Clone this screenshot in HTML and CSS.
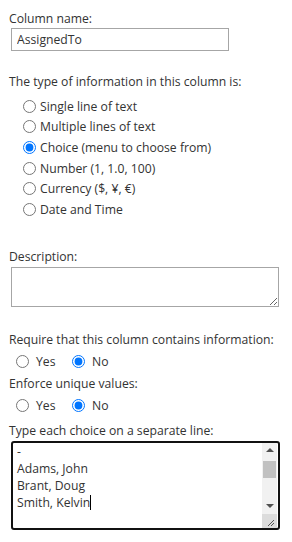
FILE: index.html
```html
<!DOCTYPE html>
<html>
<head>
<meta charset="utf-8">
<link rel="stylesheet" href="styles.css">
</head>
<body>
<div class="form">
  <div class="label first">Column name:</div>
  <input class="text-input" type="text" value="AssignedTo">

  <div class="label type-label">The type of information in this column is:</div>
  <div class="type-list">
    <label class="opt"><input type="radio" name="t"><span>Single line of text</span></label>
    <label class="opt"><input type="radio" name="t"><span>Multiple lines of text</span></label>
    <label class="opt"><input type="radio" name="t" checked><span>Choice (menu to choose from)</span></label>
    <label class="opt"><input type="radio" name="t"><span>Number (1, 1.0, 100)</span></label>
    <label class="opt"><input type="radio" name="t"><span>Currency ($, ¥, €)</span></label>
    <label class="opt"><input type="radio" name="t"><span>Date and Time</span></label>
  </div>

  <div class="label desc-label">Description:</div>
  <textarea class="desc"></textarea>

  <div class="label req-label">Require that this column contains information:</div>
  <div class="yn">
    <label class="yn-opt"><input type="radio" name="r"><span>Yes</span></label>
    <label class="yn-opt"><input type="radio" name="r" checked><span>No</span></label>
  </div>
  <div class="label row-label">Enforce unique values:</div>
  <div class="yn">
    <label class="yn-opt"><input type="radio" name="u"><span>Yes</span></label>
    <label class="yn-opt"><input type="radio" name="u" checked><span>No</span></label>
  </div>

  <div class="label choice-label">Type each choice on a separate line:</div>
  <div class="choices">
    <div class="choices-text">
      <div class="line">-</div>
      <div class="line">Adams, John</div>
      <div class="line">Brant, Doug</div>
      <div class="line">Smith, Kelvin<span class="caret"></span></div>
    </div>
    <div class="scrollbar">
      <div class="arrow up"></div>
      <div class="track"><div class="thumb"></div></div>
      <div class="arrow down"></div>
      <div class="resizer">
        <svg width="14" height="14" viewBox="0 0 14 14"><path d="M12 6 L6 12 M12 9 L9 12" stroke="#555" stroke-width="1"/></svg>
      </div>
    </div>
  </div>
</div>
</body>
</html>
```
FILE: styles.css
```css
html, body {
  margin: 0;
  padding: 0;
  background: #fff;
}
body {
  font-family: "Open Sans", "Noto Sans", sans-serif;
  font-size: 12.2px;
  color: #333;
}
.form {
  padding: 10px 0 0 9px;
  display: flex;
  flex-direction: column;
  align-items: flex-start;
}
.label {
  line-height: 20px;
  height: 20px;
  white-space: nowrap;
}
.first {
  line-height: 18px;
  height: 18px;
}
.text-input {
  box-sizing: border-box;
  margin: 0 0 0 2px;
  width: 218px;
  height: 23px;
  border: 1px solid #a6a6a6;
  border-radius: 0;
  padding: 0 5px;
  font: inherit;
  color: #333;
  outline: none;
}
.type-label {
  margin-top: 21px;
}
.type-list {
  display: flex;
  flex-direction: column;
  padding-left: 14px;
  margin-top: 4px;
}
.opt {
  display: flex;
  align-items: center;
  height: 20.6px;
  white-space: nowrap;
}
.opt input, .yn-opt input {
  margin: 0;
  width: 13px;
  height: 13px;
}
.opt span {
  margin-left: 4px;
}
.desc-label {
  margin-top: 27px;
}
.desc {
  box-sizing: border-box;
  margin: 0 0 0 2px;
  width: 268px;
  height: 40px;
  border: 1px solid #a6a6a6;
  border-radius: 0;
  font: inherit;
  resize: vertical;
  outline: none;
}
.req-label {
  margin-top: 22px;
  line-height: 22px;
  height: 22px;
}
.row-label {
  line-height: 22px;
  height: 22px;
}
.yn {
  display: flex;
  align-items: center;
  height: 22px;
  padding-left: 7px;
}
.yn-opt {
  display: flex;
  align-items: center;
  width: 56px;
}
.yn-opt span {
  margin-left: 7px;
}
.choice-label {
  margin-top: 4px;
}
.choices {
  box-sizing: border-box;
  margin-left: 2px;
  width: 269px;
  height: 89px;
  border: 2px solid #111;
  border-radius: 3px;
  display: flex;
  overflow: hidden;
}
.choices-text {
  flex: 1;
  padding: 0 0 0 4px;
}
.line {
  line-height: 17px;
  height: 17px;
  white-space: nowrap;
}
.caret {
  display: inline-block;
  width: 1px;
  height: 15px;
  background: #000;
  vertical-align: -3px;
}
.scrollbar {
  width: 15px;
  background: #f1f1f1;
  display: flex;
  flex-direction: column;
  margin-right: 1px;
}
.arrow {
  height: 15px;
  display: flex;
  align-items: center;
  justify-content: center;
}
.arrow::before {
  content: "";
  border-left: 4px solid transparent;
  border-right: 4px solid transparent;
}
.arrow.up::before {
  border-bottom: 4px solid #505050;
}
.arrow.down::before {
  border-top: 4px solid #505050;
}
.track {
  flex: 1;
  padding: 3px 1px 0 1px;
}
.thumb {
  height: 17px;
  background: #c1c1c1;
}
.resizer {
  height: 14px;
  background: #dcdcdc;
  display: flex;
}
```
